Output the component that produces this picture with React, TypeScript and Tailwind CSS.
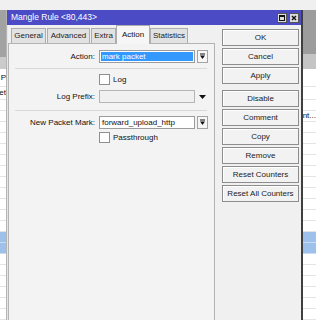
import React from "react";

const font = "font-['Liberation_Sans',Arial,sans-serif]";

type Row = { h: number; text?: string; blue?: boolean };

// background table rows (behind the dialog)
const rows: Row[] = [
  { h: 18 },
  { h: 13 },
  ...Array.from({ length: 12 }, () => ({ h: 11 })),
  { h: 11, blue: true },
  { h: 11, blue: true },
  ...Array.from({ length: 6 }, () => ({ h: 11 })),
];

function Strip({ side }: { side: "left" | "right" }) {
  return (
    <div className="flex-1 flex flex-col overflow-hidden">
      <div className={side === "left" ? "h-[53px] bg-[#a2a2a2]" : "h-[50px] bg-[#9c9c9c]"} />
      <div className={side === "left" ? "h-[14px] bg-[#cbcbcb]" : "h-[17px] bg-[#c4c4c4]"} />
      {rows.map((r, i) => {
        let text = "";
        if (side === "left" && i === 0) text = "P";
        if (side === "left" && i === 1) text = "set";
        if (side === "right" && i === 3) text = "nt...";
        return (
          <div
            key={i}
            style={{ height: r.h }}
            className={`shrink-0 flex items-center border-b whitespace-nowrap text-[#111] ${
              r.blue ? "bg-[#9dc1ea] border-[#c8dcf4]" : "bg-white border-[#e4e4e4]"
            } ${side === "left" ? "justify-end" : "justify-start"}`}
          >
            {text}
          </div>
        );
      })}
    </div>
  );
}

function DropBtn() {
  return (
    <div className="w-[11px] h-[13px] ml-[2px] border border-[#a3a3a3] bg-[#f6f6f6] flex items-center justify-center">
      <svg width="7" height="7" viewBox="0 0 7 7">
        <rect x="1" y="0.5" width="5" height="1" fill="#111" />
        <path d="M1 2.5h5L3.5 6z" fill="#111" />
      </svg>
    </div>
  );
}

function Label({ children }: { children?: React.ReactNode }) {
  return <div className="w-[86px] mr-[4px] text-right text-[#111]">{children}</div>;
}

function Check({ label, className }: { label: string; className: string }) {
  return (
    <div className={`flex items-center h-[11px] ${className}`}>
      <Label />
      <div className="w-[11px] h-[11px] border border-[#8f8f8f] bg-white" />
      <span className="ml-[3px] text-[#111]">{label}</span>
    </div>
  );
}

function Separator({ className }: { className: string }) {
  return <div className={`ml-[6px] w-[192px] h-px bg-[#d9d9d9] ${className}`} />;
}

const buttons = ["OK", "Cancel", "Apply", "Disable", "Comment", "Copy", "Remove", "Reset Counters", "Reset All Counters"];

export default function App() {
  return (
    <div className={`w-[316px] h-[320px] overflow-hidden bg-[#f0f0f0] flex flex-col text-[8px] leading-none ${font}`}>
      <div className="h-[10px] bg-[#f0f0f0] shrink-0" />
      <div className="flex flex-1 min-h-0">
        <div className="w-[6px] flex">
          <Strip side="left" />
        </div>

        {/* dialog window */}
        <div className="w-[299px] flex flex-col border-l border-[#b4b4b4] border-r-2 border-r-[#3f3f3f] bg-[#f0f0f0]">
          <div className="h-[15px] shrink-0 bg-[#4b4bc6] flex items-center pl-[4px] pr-[2px]">
            <span className="text-white text-[8.5px]">Mangle Rule &lt;80,443&gt;</span>
            <div className="ml-auto flex gap-[2px]">
              <div className="w-[10px] h-[10px] bg-[#dcdcdc] border border-[#555] flex items-center justify-center">
                <div className="w-[6px] h-[6px] border border-[#111] border-t-2" />
              </div>
              <div className="w-[10px] h-[10px] bg-[#dcdcdc] border border-[#555] flex items-center justify-center">
                <svg width="6" height="6" viewBox="0 0 6 6">
                  <path d="M1 1L5 5M5 1L1 5" stroke="#111" strokeWidth="1.4" />
                </svg>
              </div>
            </div>
          </div>

          <div className="flex flex-1 min-h-0 border-l border-[#e6e6e6]">
            {/* tabs + panel */}
            <div className="w-[207px] flex flex-col">
              <div className="h-[18px] shrink-0 flex items-end pl-[3px]">
                <div className="w-[35px] h-[15px] border border-b-0 border-[#adadad] bg-[#e2e2e2] flex items-center justify-center text-[#222]">General</div>
                <div className="w-[43px] h-[15px] ml-[1px] border border-b-0 border-[#adadad] bg-[#e2e2e2] flex items-center justify-center text-[#222]">Advanced</div>
                <div className="w-[25px] h-[15px] ml-[1px] border border-b-0 border-[#adadad] bg-[#e2e2e2] flex items-center justify-center text-[#222]">Extra</div>
                <div className="w-[34px] h-[19px] -mb-px relative z-10 border border-b-0 border-[#adadad] bg-[#f6f6f6] flex items-center justify-center text-[#111]">Action</div>
                <div className="w-[38px] h-[15px] border border-b-0 border-[#adadad] bg-[#e2e2e2] flex items-center justify-center text-[#222]">Statistics</div>
              </div>
              <div className="flex-1 border border-b-0 border-[#b4b4b4] bg-[#f3f3f3] flex flex-col">
                <div className="flex items-center h-[13px] mt-[6px]">
                  <Label>Action:</Label>
                  <div className="w-[96px] h-[13px] border border-[#9c9c9c] bg-white p-px">
                    <div className="h-full bg-[#3399ff] text-white flex items-center pl-px">mark packet</div>
                  </div>
                  <DropBtn />
                </div>
                <Separator className="mt-[5px]" />
                <Check label="Log" className="mt-[5px]" />
                <div className="flex items-center h-[13px] mt-[5px]">
                  <Label>Log Prefix:</Label>
                  <div className="w-[96px] h-[13px] border border-[#b5b5b5] bg-[#f0f0f0]" />
                  <svg width="11" height="6" viewBox="0 0 11 6" className="ml-[2px]">
                    <path d="M2 1h7L5.5 5z" fill="#111" />
                  </svg>
                </div>
                <Separator className="mt-[7px]" />
                <div className="flex items-center h-[13px] mt-[5px]">
                  <Label>New Packet Mark:</Label>
                  <div className="w-[96px] h-[13px] border border-[#9c9c9c] bg-white flex items-center pl-[2px] text-[#111]">forward_upload_http</div>
                  <DropBtn />
                </div>
                <Check label="Passthrough" className="mt-[3px]" />
              </div>
            </div>

            {/* button column */}
            <div className="w-[77px] ml-[7px] pt-[4px] flex flex-col gap-[2px]">
              {buttons.map((b) => (
                <div
                  key={b}
                  className={`h-[17px] shrink-0 border border-[#8d8d8d] bg-[#f2f2f2] shadow-[inset_1px_1px_0_#ffffff] flex items-center justify-center text-[#222] ${
                    b === "Disable" ? "mt-[4px]" : ""
                  }`}
                >
                  {b}
                </div>
              ))}
            </div>
          </div>
        </div>

        <div className="flex-1 flex">
          <Strip side="right" />
        </div>
      </div>
    </div>
  );
}
